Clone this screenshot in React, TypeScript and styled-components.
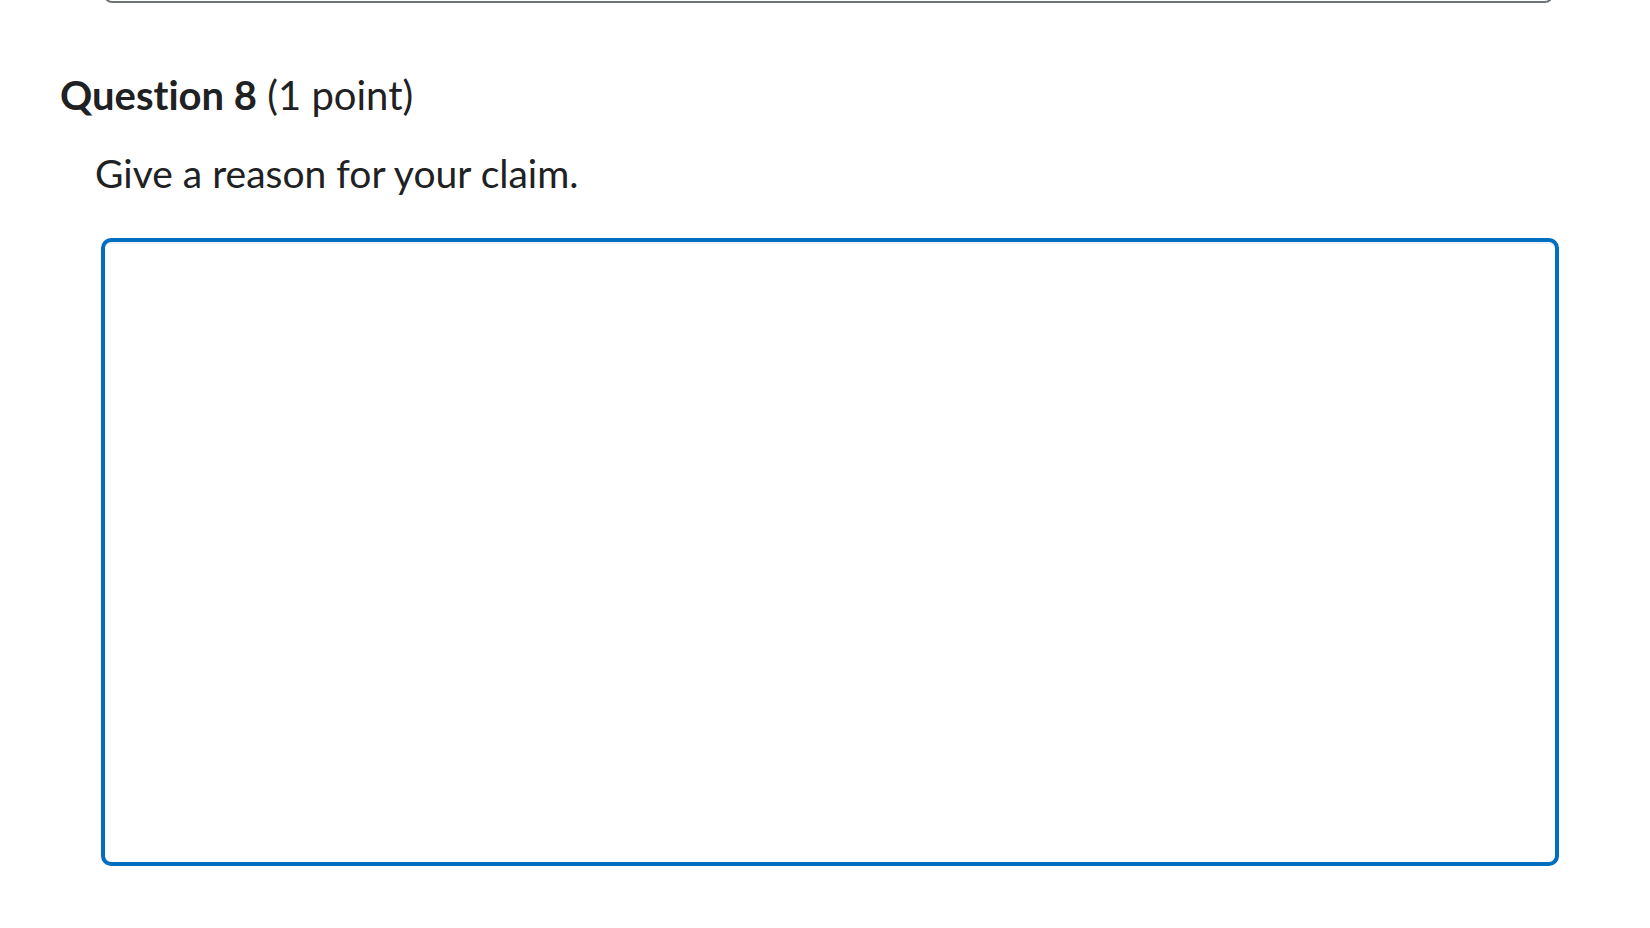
import React from "react";
import styled, { createGlobalStyle } from "styled-components";

const Global = createGlobalStyle`
  html, body { margin: 0; padding: 0; background: #ffffff; }
  body {
    font-family: Lato, "Noto Sans", "Liberation Sans", sans-serif;
    color: #202122;
    font-variant-ligatures: none;
  }
`;

const Page = styled.main`
  display: flex;
  flex-direction: column;
  padding: 0 91px 0 60px;
  height: 928px;
  box-sizing: border-box;
  overflow: hidden;
`;

const PrevCardEdge = styled.div`
  height: 10px;
  margin: -9px 6px 0 44px;
  border: 2px solid #6e7376;
  border-top: none;
  border-radius: 0 0 8px 8px;
`;

const Heading = styled.h2`
  margin: 68px 0 0 0;
  font-size: 40px;
  line-height: 48px;
  font-weight: 400;
  color: #202122;
`;

const Strong = styled.span`
  font-weight: 700;
`;

const Prompt = styled.p`
  margin: 31px 0 0 35px;
  font-size: 39px;
  line-height: 46px;
  font-weight: 400;
  color: #202122;
`;

const Answer = styled.textarea`
  display: block;
  margin: 42px 0 0 41px;
  height: 628px;
  box-sizing: border-box;
  border: 4px solid #006fbf;
  border-radius: 10px;
  box-shadow: inset 0 2px 0 0 #eef0f3;
  resize: none;
  outline: none;
  padding: 12px 16px;
  font-family: Lato, "Noto Sans", sans-serif;
  font-size: 28px;
  background: #ffffff;
`;

export default function App() {
  return (
    <>
      <Global />
      <Page>
        <PrevCardEdge />
        <Heading>
          <Strong>Question 8</Strong> (1 point)
        </Heading>
        <Prompt>Give a reason for your claim.</Prompt>
        <Answer aria-label="Give a reason for your claim." />
      </Page>
    </>
  );
}
